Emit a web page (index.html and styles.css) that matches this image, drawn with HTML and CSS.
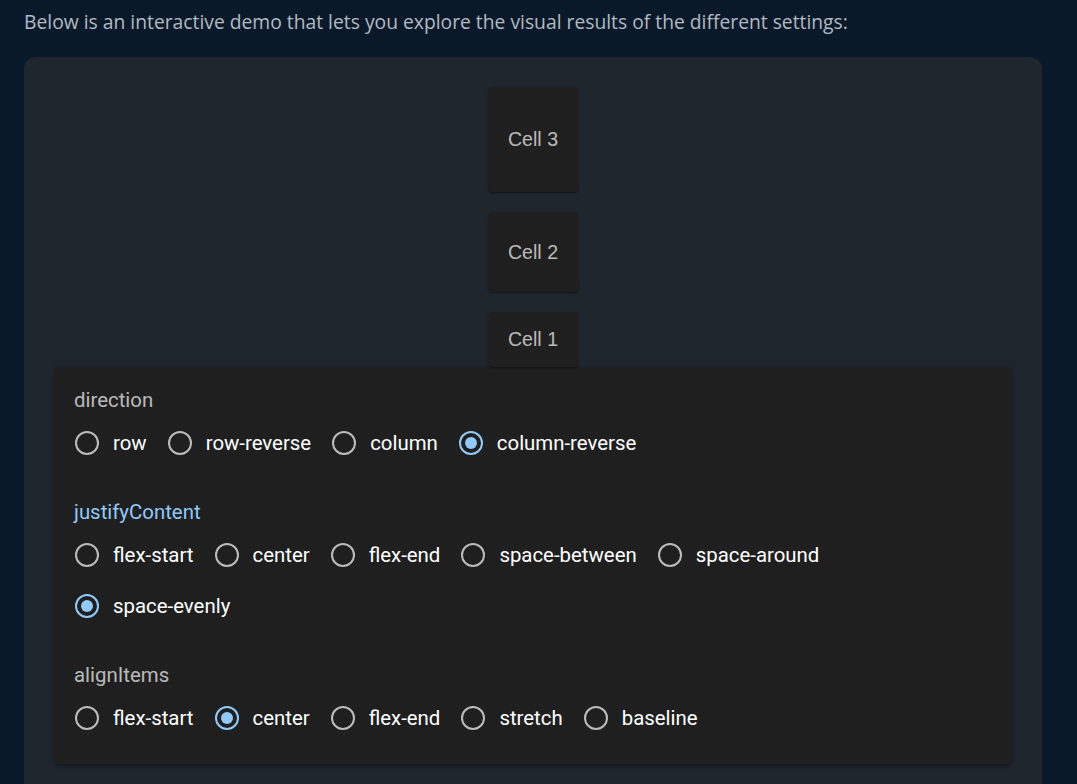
FILE: index.html
```html
<!DOCTYPE html>
<html lang="en">
<head>
    <meta charset="UTF-8">
    <meta name="viewport" content="width=device-width, initial-scale=1.0">
    <title>Interactive grid demo</title>
    <link rel="stylesheet" href="styles.css">
</head>
<body>
    <div class="page">
        <p class="intro">Below is an interactive demo that lets you explore the visual results of the different settings:</p>

        <div class="demo">
            <div class="cells">
                <div class="cell cell-1">Cell 1</div>
                <div class="cell cell-2">Cell 2</div>
                <div class="cell cell-3">Cell 3</div>
            </div>

            <div class="panel">
                <div class="group">
                    <div class="group-label">direction</div>
                    <div class="options">
                        <label class="option"><span class="radio"></span>row</label>
                        <label class="option"><span class="radio"></span>row-reverse</label>
                        <label class="option"><span class="radio"></span>column</label>
                        <label class="option"><span class="radio checked"></span>column-reverse</label>
                    </div>
                </div>

                <div class="group">
                    <div class="group-label focused">justifyContent</div>
                    <div class="options">
                        <label class="option"><span class="radio"></span>flex-start</label>
                        <label class="option"><span class="radio"></span>center</label>
                        <label class="option"><span class="radio"></span>flex-end</label>
                        <label class="option"><span class="radio"></span>space-between</label>
                        <label class="option"><span class="radio"></span>space-around</label>
                        <label class="option"><span class="radio checked"></span>space-evenly</label>
                    </div>
                </div>

                <div class="group">
                    <div class="group-label">alignItems</div>
                    <div class="options">
                        <label class="option"><span class="radio"></span>flex-start</label>
                        <label class="option"><span class="radio checked"></span>center</label>
                        <label class="option"><span class="radio"></span>flex-end</label>
                        <label class="option"><span class="radio"></span>stretch</label>
                        <label class="option"><span class="radio"></span>baseline</label>
                    </div>
                </div>
            </div>
        </div>
    </div>
</body>
</html>
```

FILE: styles.css
```css
body {
    margin: 0;
    background: #0a1929;
    font-family: 'Open Sans', sans-serif;
    overflow: hidden;
}

.page {
    padding: 0 35px 0 24px;
}

.intro {
    margin: 0 0 21px;
    padding-top: 8px;
    font-size: 19.3px;
    line-height: 28px;
    color: #b2bac2;
    white-space: nowrap;
}

.demo {
    background: #1f262e;
    border-radius: 12px 12px 0 0;
    padding: 30px 30px 20px;
}

/* celdas */
.cells {
    display: flex;
    flex-direction: column-reverse;
    align-items: center;
    gap: 20px;
}

.cell {
    width: 91px;
    display: flex;
    align-items: center;
    justify-content: center;
    background: #1f1f1f;
    border-radius: 5px;
    box-shadow: 0 2px 1px -1px rgba(0, 0, 0, 0.2), 0 1px 1px rgba(0, 0, 0, 0.14), 0 1px 3px rgba(0, 0, 0, 0.12);
    font-family: 'Liberation Sans', Arial, sans-serif;
    font-size: 19.6px;
    color: rgba(255, 255, 255, 0.7);
}

.cell-1 {
    height: 55px;
}

.cell-2 {
    height: 80px;
}

.cell-3 {
    height: 105px;
}

/* panel de controles */
.panel {
    background: #1f1f1f;
    border-radius: 5px;
    padding: 19px 20px 21px 21px;
    box-shadow: 0 3px 3px -2px rgba(0, 0, 0, 0.2), 0 3px 4px rgba(0, 0, 0, 0.14), 0 1px 8px rgba(0, 0, 0, 0.12);
    font-family: 'Roboto', sans-serif;
    font-size: 20.4px;
}

.group + .group {
    margin-top: 30px;
}

.group-label {
    line-height: 28px;
    color: rgba(255, 255, 255, 0.7);
    margin-left: -1px;
}

.group-label.focused {
    color: #90caf9;
}

.options {
    display: flex;
    flex-wrap: wrap;
    margin-top: 3px;
}

.option {
    display: flex;
    align-items: center;
    gap: 14px;
    height: 51px;
    margin-right: 21px;
    color: #fff;
    cursor: pointer;
}

.radio {
    width: 24px;
    height: 24px;
    box-sizing: border-box;
    border: 2.4px solid rgba(255, 255, 255, 0.7);
    border-radius: 50%;
    display: flex;
    align-items: center;
    justify-content: center;
}

.radio.checked {
    border-color: #90caf9;
}

.radio.checked::after {
    content: '';
    width: 12px;
    height: 12px;
    border-radius: 50%;
    background: #90caf9;
}
```
